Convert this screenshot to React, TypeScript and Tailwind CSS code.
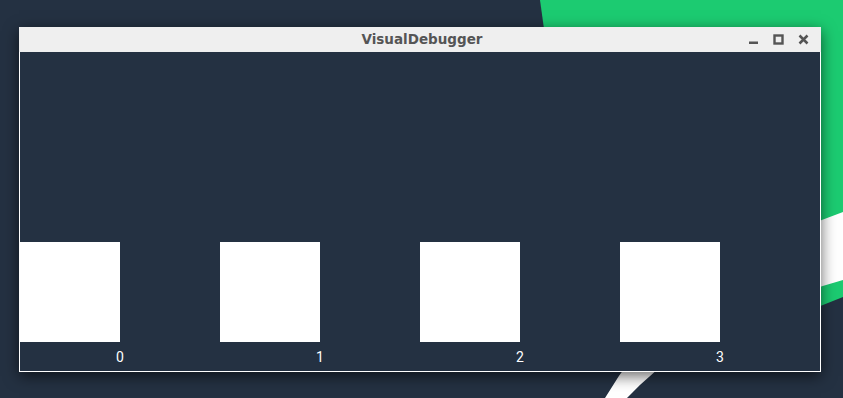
import React from 'react';

const Wallpaper = () => (
  <svg className="absolute inset-0" width="843" height="398" viewBox="0 0 843 398">
    <path d="M540 0 H843 V297 L760 330 L600 330 Q560 150 540 0 Z" fill="#1ccb71" />
    <path d="M843 212 L843 280 Q700 320 627 398 L605 398 Q680 270 843 212 Z" fill="#ffffff" />
  </svg>
);

const TitleButtons = () => (
  <div className="absolute right-[12px] top-0 h-[25px] flex items-center gap-[14px] text-[#555555]">
    <svg width="11" height="11" viewBox="0 0 11 11">
      <rect x="1" y="7.5" width="9" height="2.5" fill="currentColor" />
    </svg>
    <svg width="11" height="11" viewBox="0 0 11 11">
      <rect x="1.5" y="1.5" width="8" height="8" fill="none" stroke="currentColor" strokeWidth="2.4" />
    </svg>
    <svg width="11" height="11" viewBox="0 0 11 11">
      <path d="M1.5 1.5 L9.5 9.5 M9.5 1.5 L1.5 9.5" stroke="currentColor" strokeWidth="2.5" />
    </svg>
  </div>
);

const Cell = ({ label }: { label: string }) => (
  <div className="w-[200px] flex flex-col">
    <div className="w-[100px] h-[100px] bg-white" />
    <div className="ml-[100px] w-0 h-[20px] mt-[5px] flex justify-center items-center">
      <span className="text-[14px] text-white leading-none" style={{ fontFamily: 'Roboto, sans-serif' }}>{label}</span>
    </div>
  </div>
);

export default function App() {
  return (
    <div className="relative w-[843px] h-[398px] overflow-hidden bg-[#243142]">
      <Wallpaper />
      <div className="absolute left-[19px] top-[27px] w-[802px] shadow-[0_4px_14px_rgba(0,0,0,0.6)]">
        <div className="relative h-[25px] bg-[#efefef] flex items-center justify-center">
          <span
            className="text-[13.5px] font-bold text-[#555555] pl-[4px]"
            style={{ fontFamily: '"DejaVu Sans", sans-serif' }}
          >
            VisualDebugger
          </span>
          <TitleButtons />
        </div>
        <div className="h-[320px] bg-[#243142] border-x border-b border-white flex pt-[190px]">
          {['0', '1', '2', '3'].map((l) => (
            <Cell key={l} label={l} />
          ))}
        </div>
      </div>
    </div>
  );
}
